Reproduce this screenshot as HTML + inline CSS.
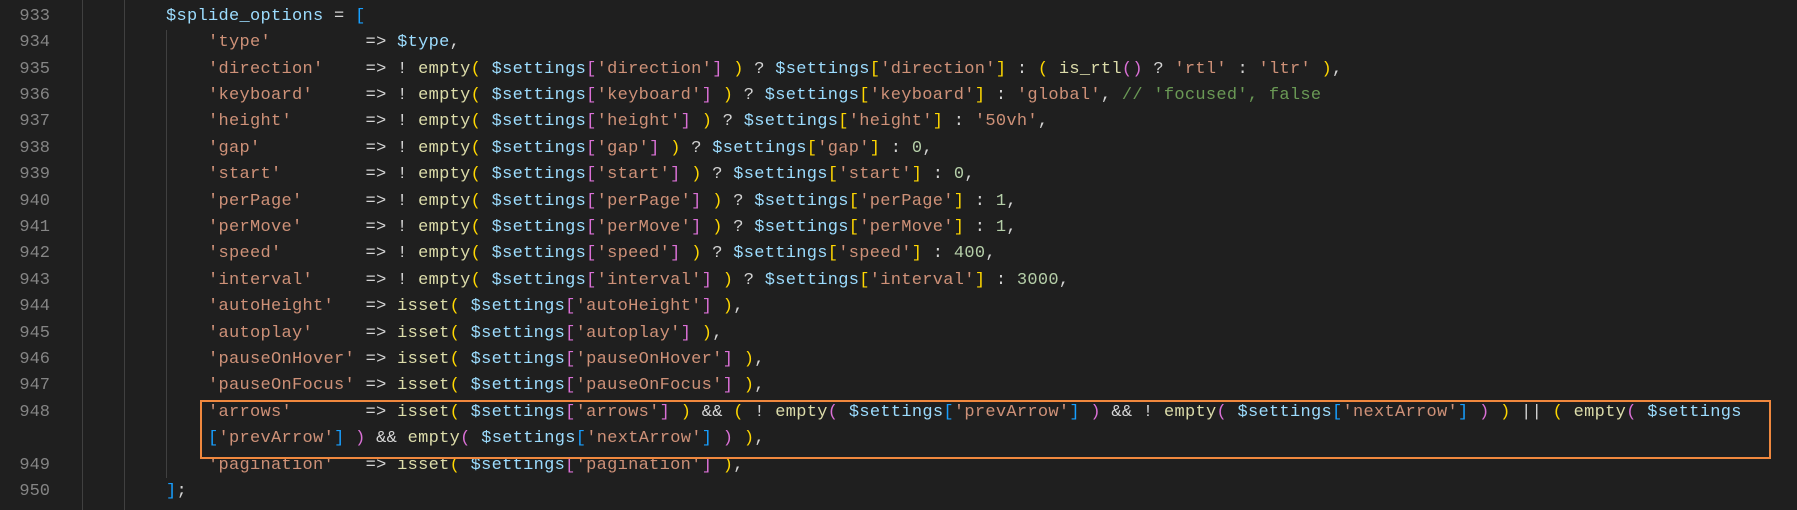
<!DOCTYPE html>
<html><head><meta charset="utf-8"><style>
html,body{margin:0;padding:0;background:#1f1f1f;width:1797px;height:510px;overflow:hidden}
.ln{position:absolute;left:0;top:3.8px;width:50px;text-align:right;font:17px/26.4px "Liberation Mono",monospace;color:#858585;white-space:pre}
.code{position:absolute;left:82px;top:3.8px;font:17px/26.4px "Liberation Mono",monospace;letter-spacing:0.3px;color:#d4d4d4;white-space:pre}
.g{position:absolute;width:1px;background:#404040}
.s{color:#ce9178}.v{color:#9cdcfe}.f{color:#dcdcaa}.n{color:#b5cea8}.c{color:#6a9955}
.y{color:#ffd700}.p{color:#da70d6}.b{color:#179fff}
.box{position:absolute;left:200px;top:400px;width:1567px;height:55px;border:2px solid #f0883e}
</style></head><body>
<div class="g" style="left:82px;top:0;height:510px"></div>
<div class="g" style="left:124px;top:0;height:510px"></div>
<div class="g" style="left:166px;top:30px;height:448px"></div>
<div class="ln">933
934
935
936
937
938
939
940
941
942
943
944
945
946
947
948

949
950</div>
<div class="code">        <span class="v">$splide_options</span> = <span class="b">[</span>
            <span class="s">'type'</span>         =&gt; <span class="v">$type</span>,
            <span class="s">'direction'</span>    =&gt; ! <span class="f">empty</span><span class="y">(</span> <span class="v">$settings</span><span class="p">[</span><span class="s">'direction'</span><span class="p">]</span> <span class="y">)</span> ? <span class="v">$settings</span><span class="y">[</span><span class="s">'direction'</span><span class="y">]</span> : <span class="y">(</span> <span class="f">is_rtl</span><span class="p">()</span> ? <span class="s">'rtl'</span> : <span class="s">'ltr'</span> <span class="y">)</span>,
            <span class="s">'keyboard'</span>     =&gt; ! <span class="f">empty</span><span class="y">(</span> <span class="v">$settings</span><span class="p">[</span><span class="s">'keyboard'</span><span class="p">]</span> <span class="y">)</span> ? <span class="v">$settings</span><span class="y">[</span><span class="s">'keyboard'</span><span class="y">]</span> : <span class="s">'global'</span>, <span class="c">// 'focused', false</span>
            <span class="s">'height'</span>       =&gt; ! <span class="f">empty</span><span class="y">(</span> <span class="v">$settings</span><span class="p">[</span><span class="s">'height'</span><span class="p">]</span> <span class="y">)</span> ? <span class="v">$settings</span><span class="y">[</span><span class="s">'height'</span><span class="y">]</span> : <span class="s">'50vh'</span>,
            <span class="s">'gap'</span>          =&gt; ! <span class="f">empty</span><span class="y">(</span> <span class="v">$settings</span><span class="p">[</span><span class="s">'gap'</span><span class="p">]</span> <span class="y">)</span> ? <span class="v">$settings</span><span class="y">[</span><span class="s">'gap'</span><span class="y">]</span> : <span class="n">0</span>,
            <span class="s">'start'</span>        =&gt; ! <span class="f">empty</span><span class="y">(</span> <span class="v">$settings</span><span class="p">[</span><span class="s">'start'</span><span class="p">]</span> <span class="y">)</span> ? <span class="v">$settings</span><span class="y">[</span><span class="s">'start'</span><span class="y">]</span> : <span class="n">0</span>,
            <span class="s">'perPage'</span>      =&gt; ! <span class="f">empty</span><span class="y">(</span> <span class="v">$settings</span><span class="p">[</span><span class="s">'perPage'</span><span class="p">]</span> <span class="y">)</span> ? <span class="v">$settings</span><span class="y">[</span><span class="s">'perPage'</span><span class="y">]</span> : <span class="n">1</span>,
            <span class="s">'perMove'</span>      =&gt; ! <span class="f">empty</span><span class="y">(</span> <span class="v">$settings</span><span class="p">[</span><span class="s">'perMove'</span><span class="p">]</span> <span class="y">)</span> ? <span class="v">$settings</span><span class="y">[</span><span class="s">'perMove'</span><span class="y">]</span> : <span class="n">1</span>,
            <span class="s">'speed'</span>        =&gt; ! <span class="f">empty</span><span class="y">(</span> <span class="v">$settings</span><span class="p">[</span><span class="s">'speed'</span><span class="p">]</span> <span class="y">)</span> ? <span class="v">$settings</span><span class="y">[</span><span class="s">'speed'</span><span class="y">]</span> : <span class="n">400</span>,
            <span class="s">'interval'</span>     =&gt; ! <span class="f">empty</span><span class="y">(</span> <span class="v">$settings</span><span class="p">[</span><span class="s">'interval'</span><span class="p">]</span> <span class="y">)</span> ? <span class="v">$settings</span><span class="y">[</span><span class="s">'interval'</span><span class="y">]</span> : <span class="n">3000</span>,
            <span class="s">'autoHeight'</span>   =&gt; <span class="f">isset</span><span class="y">(</span> <span class="v">$settings</span><span class="p">[</span><span class="s">'autoHeight'</span><span class="p">]</span> <span class="y">)</span>,
            <span class="s">'autoplay'</span>     =&gt; <span class="f">isset</span><span class="y">(</span> <span class="v">$settings</span><span class="p">[</span><span class="s">'autoplay'</span><span class="p">]</span> <span class="y">)</span>,
            <span class="s">'pauseOnHover'</span> =&gt; <span class="f">isset</span><span class="y">(</span> <span class="v">$settings</span><span class="p">[</span><span class="s">'pauseOnHover'</span><span class="p">]</span> <span class="y">)</span>,
            <span class="s">'pauseOnFocus'</span> =&gt; <span class="f">isset</span><span class="y">(</span> <span class="v">$settings</span><span class="p">[</span><span class="s">'pauseOnFocus'</span><span class="p">]</span> <span class="y">)</span>,
            <span class="s">'arrows'</span>       =&gt; <span class="f">isset</span><span class="y">(</span> <span class="v">$settings</span><span class="p">[</span><span class="s">'arrows'</span><span class="p">]</span> <span class="y">)</span> &amp;&amp; <span class="y">(</span> ! <span class="f">empty</span><span class="p">(</span> <span class="v">$settings</span><span class="b">[</span><span class="s">'prevArrow'</span><span class="b">]</span> <span class="p">)</span> &amp;&amp; ! <span class="f">empty</span><span class="p">(</span> <span class="v">$settings</span><span class="b">[</span><span class="s">'nextArrow'</span><span class="b">]</span> <span class="p">)</span> <span class="y">)</span> || <span class="y">(</span> <span class="f">empty</span><span class="p">(</span> <span class="v">$settings</span>
            <span class="b">[</span><span class="s">'prevArrow'</span><span class="b">]</span> <span class="p">)</span> &amp;&amp; <span class="f">empty</span><span class="p">(</span> <span class="v">$settings</span><span class="b">[</span><span class="s">'nextArrow'</span><span class="b">]</span> <span class="p">)</span> <span class="y">)</span>,
            <span class="s">'pagination'</span>   =&gt; <span class="f">isset</span><span class="y">(</span> <span class="v">$settings</span><span class="p">[</span><span class="s">'pagination'</span><span class="p">]</span> <span class="y">)</span>,
        <span class="b">]</span>;</div>
<div class="box"></div>
</body></html>
